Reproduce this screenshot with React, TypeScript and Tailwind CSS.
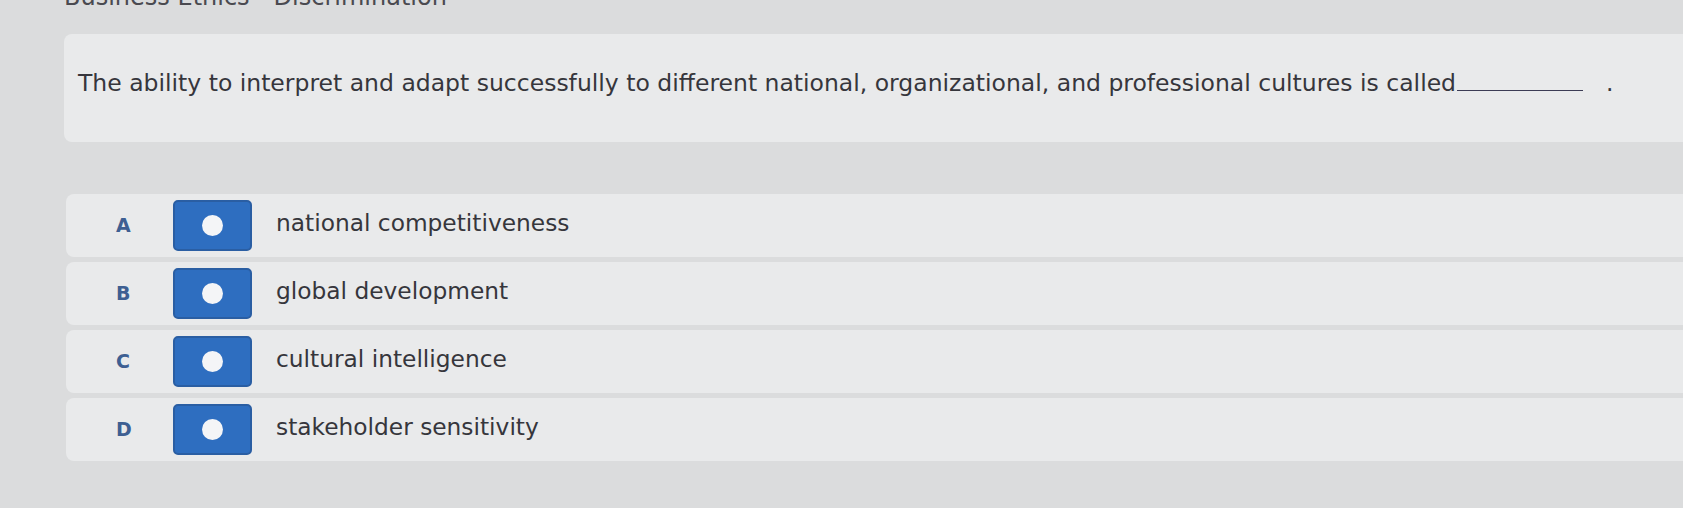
const options = [
  { letter: "A", text: "national competitiveness" },
  { letter: "B", text: "global development" },
  { letter: "C", text: "cultural intelligence" },
  { letter: "D", text: "stakeholder sensitivity" },
];

function RadioTile() {
  return (
    <div className="flex h-[51px] w-[79px] items-center justify-center rounded-[5px] border-2 border-[#2a5ea3] bg-[#2e6ec0]">
      <div className="h-[21px] w-[21px] rounded-full bg-[#f4f5f7]" />
    </div>
  );
}

export default function App() {
  return (
    <div className="h-[508px] w-full overflow-hidden bg-[#dbdcdd] font-['DejaVu_Sans',sans-serif]">
      {/* title is mostly off the top of the photo */}
      <div className="-mt-[17px] pl-[64px] text-[24px] leading-[28px] text-[#4a4a50]">
        Business Ethics - Discrimination
      </div>

      <div className="ml-[64px] mt-[23px] flex h-[108px] items-center rounded-l-lg bg-[#e9eaeb] pb-[8px] pl-[14px]">
        <p className="whitespace-nowrap text-[23.5px] text-[#36363c]">
          The ability to interpret and adapt successfully to different national, organizational, and professional
          cultures is called
          <span className="mx-[1px] inline-block w-[126px] border-b-[1.5px] border-[#3c3c55] align-baseline" />
          <span className="ml-[22px]">.</span>
        </p>
      </div>

      <div className="ml-[66px] mt-[52px] flex flex-col gap-[5px]">
        {options.map((o) => (
          <div key={o.letter} className="flex h-[63px] items-center rounded-l-lg bg-[#e9eaeb]">
            <div className="w-[107px] pl-[50px] text-[19px] font-bold text-[#3e5f92]">{o.letter}</div>
            <RadioTile />
            <div className="ml-[24px] pb-[4px] text-[23.3px] text-[#36363c]">{o.text}</div>
          </div>
        ))}
      </div>
    </div>
  );
}
